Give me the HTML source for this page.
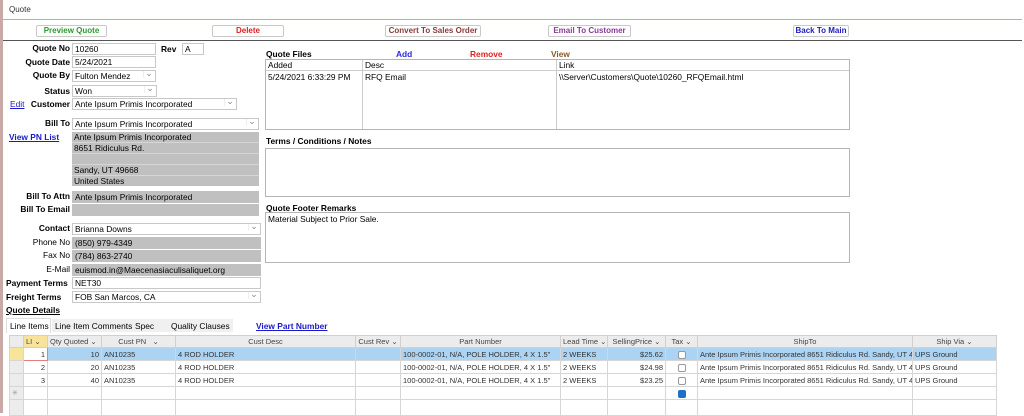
<!DOCTYPE html>
<html><head><meta charset="utf-8"><style>
*{margin:0;padding:0;box-sizing:border-box}
body{width:1024px;height:413px;overflow:hidden;background:#fff;font-family:"Liberation Sans",sans-serif;font-size:8.4px;color:#000;position:relative}
.a{position:absolute;white-space:nowrap}
.lb{position:absolute;font-weight:bold;text-align:right;width:70px;left:0;line-height:11px}
.f{position:absolute;border:1px solid #c8c8c8;background:#fff;height:12px;line-height:10px;padding-left:2px;overflow:hidden;white-space:nowrap}
.g{background:#c0c0c0;border-color:#c0c0c0}
.dd::after{content:"⌄";position:absolute;right:1px;top:-3px;width:10px;height:10px;color:#888;font-size:9px;text-align:center;border-left:1px solid #eee}
.btn{position:absolute;top:25px;height:12px;border:1px solid #c9c9c9;border-radius:2px;background:#fff;font-weight:bold;text-align:center;line-height:10px;font-size:8px}
.lnk{color:#1a1acc;text-decoration:underline;font-weight:bold}
.box{position:absolute;border:1px solid #b5b5b5;background:#fff}
table{border-collapse:collapse;table-layout:fixed;position:absolute}
td{border:1px solid #d6d6d6;height:13px;padding:0 2px;overflow:hidden;white-space:nowrap;font-size:7.5px;color:#333}
th{border:1px solid #d0d0d0;height:12px;background:#ececec;font-weight:normal;font-size:7.5px;color:#444;padding:0 2px;overflow:hidden;white-space:nowrap}
.r{text-align:right}
.sel td{background:#acd3f2}
.cb{display:inline-block;width:8px;height:8px;border:1px solid #999;border-radius:2px;background:#fff;vertical-align:middle}
</style></head><body>
<div class="a" style="left:0;top:0;width:3px;height:413px;background:#c9a9a5"></div>
<div class="a" style="left:9px;top:5px;font-size:8px;color:#333">Quote</div>
<div class="a" style="left:3px;top:19px;width:1019px;height:1px;background:#d8a0a0"></div>
<div class="btn" style="left:36px;width:71px;color:#2a9a2a">Preview Quote</div>
<div class="btn" style="left:212px;width:72px;color:#e02020">Delete</div>
<div class="btn" style="left:385px;width:96px;color:#8a3a3a">Convert To Sales Order</div>
<div class="btn" style="left:548px;width:83px;color:#8a3a9a">Email  To Customer</div>
<div class="btn" style="left:793px;width:56px;color:#2020c0">Back To Main</div>
<div class="a" style="left:3px;top:40px;width:1019px;height:1px;background:#555"></div>

<div class="lb" style="top:43px">Quote No</div><div class="f" style="left:72px;top:43px;width:84px">10260</div>
<div class="a" style="left:161px;top:44px;font-weight:bold">Rev</div><div class="f" style="left:182px;top:43px;width:22px">A</div>
<div class="lb" style="top:57px">Quote Date</div><div class="f" style="left:72px;top:56px;width:84px">5/24/2021</div>
<div class="lb" style="top:70px">Quote By</div><div class="f dd" style="left:72px;top:70px;width:84px">Fulton Mendez</div>
<div class="lb" style="top:86px">Status</div><div class="f dd" style="left:72px;top:85px;width:85px">Won</div>
<div class="a lnk" style="left:10px;top:99px;font-weight:normal">Edit</div>
<div class="lb" style="top:99px">Customer</div><div class="f dd" style="left:72px;top:98px;width:165px">Ante Ipsum Primis Incorporated</div>
<div class="lb" style="top:118px">Bill To</div><div class="f dd" style="left:72px;top:118px;width:187px">Ante Ipsum Primis Incorporated</div>
<div class="a lnk" style="left:9px;top:132px">View PN List</div>
<div class="a" style="left:72px;top:132px;width:187px;height:54px;background:#c0c0c0;line-height:11px;padding-left:2px;background-image:repeating-linear-gradient(#c0c0c0 0 10px,#d6d6d6 10px 11px)">Ante Ipsum Primis Incorporated<br>8651 Ridiculus Rd.<br>&nbsp;<br>Sandy, UT  49668<br>United States</div>
<div class="lb" style="top:191px">Bill To Attn</div><div class="f g" style="left:72px;top:191px;width:187px">Ante Ipsum Primis Incorporated</div>
<div class="lb" style="top:204px">Bill To Email</div><div class="f g" style="left:72px;top:204px;width:187px"></div>
<div class="lb" style="top:223px">Contact</div><div class="f dd" style="left:72px;top:223px;width:189px">Brianna Downs</div>
<div class="lb" style="top:237px;font-weight:normal">Phone No</div><div class="f g" style="left:72px;top:237px;width:189px">(850) 979-4349</div>
<div class="lb" style="top:250px;font-weight:normal">Fax No</div><div class="f g" style="left:72px;top:250px;width:189px">(784) 863-2740</div>
<div class="lb" style="top:264px;font-weight:normal">E-Mail</div><div class="f g" style="left:72px;top:264px;width:189px">euismod.in@Maecenasiaculisaliquet.org</div>
<div class="a" style="left:6px;top:278px;font-weight:bold">Payment Terms</div><div class="f" style="left:72px;top:277px;width:189px">NET30</div>
<div class="a" style="left:6px;top:292px;font-weight:bold">Freight Terms</div><div class="f dd" style="left:72px;top:291px;width:189px">FOB San Marcos, CA</div>
<div class="a" style="left:6px;top:305px;font-weight:bold;text-decoration:underline">Quote Details</div>

<div class="a" style="left:266px;top:49px;font-weight:bold">Quote Files</div>
<div class="a" style="left:396px;top:49px;font-weight:bold;color:#2a2ae0">Add</div>
<div class="a" style="left:470px;top:49px;font-weight:bold;color:#e02020">Remove</div>
<div class="a" style="left:551px;top:49px;font-weight:bold;color:#8a5a2a">View</div>
<div class="box" style="left:265px;top:59px;width:585px;height:71px"></div>
<div class="a" style="left:266px;top:70px;width:583px;height:1px;background:#ccc"></div>
<div class="a" style="left:362px;top:60px;width:1px;height:69px;background:#ccc"></div>
<div class="a" style="left:556px;top:60px;width:1px;height:69px;background:#ccc"></div>
<div class="a" style="left:268px;top:60px">Added</div><div class="a" style="left:365px;top:60px">Desc</div><div class="a" style="left:559px;top:60px">Link</div>
<div class="a" style="left:268px;top:72px">5/24/2021 6:33:29 PM</div><div class="a" style="left:365px;top:72px">RFQ Email</div><div class="a" style="left:559px;top:72px">\\Server\Customers\Quote\10260_RFQEmail.html</div>
<div class="a" style="left:266px;top:136px;font-weight:bold">Terms / Conditions / Notes</div>
<div class="box" style="left:265px;top:148px;width:585px;height:49px"></div>
<div class="a" style="left:266px;top:203px;font-weight:bold">Quote Footer Remarks</div>
<div class="box" style="left:265px;top:212px;width:585px;height:51px"></div>
<div class="a" style="left:268px;top:214px">Material Subject to Prior Sale.</div>

<div class="a" style="left:6px;top:318px;width:45px;height:15px;border:1px solid #ddd;border-bottom:none;background:#fff;padding:2px 0 0 3px">Line Items</div>
<div class="a" style="left:52px;top:319px;width:80px;height:13px;background:#f0f0f0;padding:2px 0 0 3px">Line Item Comments</div>
<div class="a" style="left:132px;top:319px;width:34px;height:13px;background:#f0f0f0;padding:2px 0 0 3px">Spec</div>
<div class="a" style="left:166px;top:319px;width:67px;height:13px;background:#f0f0f0;padding:2px 0 0 5px">Quality Clauses</div>
<div class="a lnk" style="left:256px;top:321px">View Part Number</div>

<table style="left:9px;top:335px;width:987px">
<colgroup><col style="width:14px"><col style="width:24px"><col style="width:54px"><col style="width:74px"><col style="width:180px"><col style="width:45px"><col style="width:160px"><col style="width:47px"><col style="width:58px"><col style="width:32px"><col style="width:215px"><col style="width:84px"></colgroup>
<tr><th></th><th style="background:#f7e49a;text-align:left">LI ⌄</th><th style="text-align:left">Qty Quoted ⌄</th><th>Cust PN &nbsp; ⌄</th><th>Cust Desc</th><th>Cust Rev ⌄</th><th>Part Number</th><th>Lead Time ⌄</th><th>SellingPrice ⌄</th><th>Tax ⌄</th><th>ShipTo</th><th>Ship Via ⌄</th></tr>
<tr class="sel"><td style="background:#f7e49a"></td><td class="r" style="background:#fff;border:1px solid #e08080">1</td><td class="r">10</td><td>AN10235</td><td>4 ROD HOLDER</td><td></td><td>100-0002-01, N/A, POLE HOLDER, 4 X 1.5"</td><td>2 WEEKS</td><td class="r">$25.62</td><td style="text-align:center"><span class="cb"></span></td><td>Ante Ipsum Primis Incorporated 8651 Ridiculus Rd. Sandy, UT  496</td><td>UPS Ground</td></tr>
<tr><td style="background:#ececec"></td><td class="r">2</td><td class="r">20</td><td>AN10235</td><td>4 ROD HOLDER</td><td></td><td>100-0002-01, N/A, POLE HOLDER, 4 X 1.5"</td><td>2 WEEKS</td><td class="r">$24.98</td><td style="text-align:center"><span class="cb"></span></td><td>Ante Ipsum Primis Incorporated 8651 Ridiculus Rd. Sandy, UT  496</td><td>UPS Ground</td></tr>
<tr><td style="background:#ececec"></td><td class="r">3</td><td class="r">40</td><td>AN10235</td><td>4 ROD HOLDER</td><td></td><td>100-0002-01, N/A, POLE HOLDER, 4 X 1.5"</td><td>2 WEEKS</td><td class="r">$23.25</td><td style="text-align:center"><span class="cb"></span></td><td>Ante Ipsum Primis Incorporated 8651 Ridiculus Rd. Sandy, UT  496</td><td>UPS Ground</td></tr>
<tr><td style="background:#ececec;color:#999;font-size:7px">✳</td><td></td><td></td><td></td><td></td><td></td><td></td><td></td><td></td><td style="text-align:center"><span class="cb" style="background:#1e6fc8;border-color:#1e6fc8"></span></td><td></td><td></td></tr>
<tr><td style="background:#ececec;height:16px"></td><td></td><td></td><td></td><td></td><td></td><td></td><td></td><td></td><td></td><td></td><td></td></tr>
</table>
</body></html>
